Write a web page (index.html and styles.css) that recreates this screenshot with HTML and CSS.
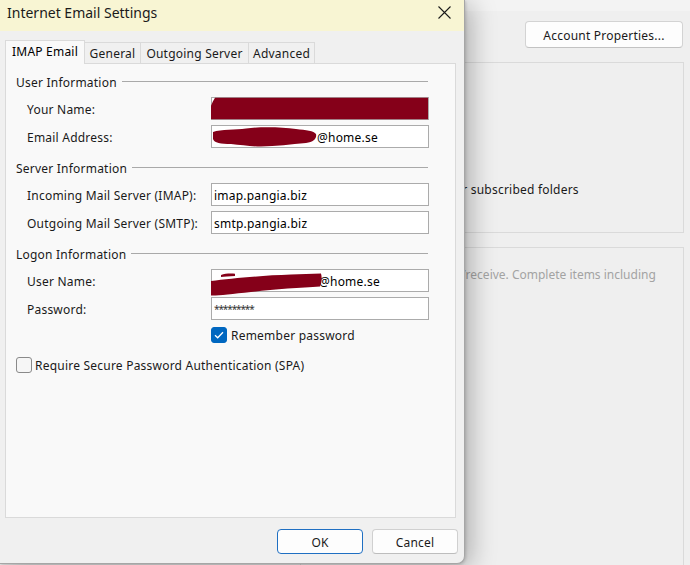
FILE: index.html
```html
<!DOCTYPE html>
<html lang="en">
<head>
<meta charset="utf-8">
<title>Internet Email Settings</title>
<link rel="stylesheet" href="styles.css">
</head>
<body>
<div class="app">
  <div class="app-top">
    <button class="acct-btn">Account Properties...</button>
  </div>
  <div class="app-box box-folders">
    <p class="opt">Show folder list for subscribed folders</p>
  </div>
  <div class="app-box box-sync">
    <p class="note">Send/receive. Complete items including</p>
  </div>
</div>

<div class="dialog">
  <div class="titlebar">
    <span class="title">Internet Email Settings</span>
    <span class="close">
      <svg width="13" height="13" viewBox="0 0 13 13"><path d="M0.5 0.5 L12.5 12.5 M12.5 0.5 L0.5 12.5" stroke="#1b1b1b" stroke-width="1.1" fill="none"/></svg>
    </span>
  </div>
  <div class="dlg-body">
    <div class="tabs">
      <div class="tab active">IMAP Email</div>
      <div class="tab t-general">General</div>
      <div class="tab t-outgoing">Outgoing Server</div>
      <div class="tab t-advanced">Advanced</div>
    </div>
    <div class="panel">
      <div class="group">
        <div class="group-head"><span class="head-text">User Information</span><span class="rule"></span></div>
        <div class="rows">
          <span class="lbl">Your Name:</span>
          <div class="field">
            <svg class="redact" width="222" height="24" viewBox="0 0 222 24"><path d="M4 0.8 L217 0.8 L217 22.2 L0 22.2 C-1 19 0 15 -1 12 C0 8 2 4 4 0.8 Z" fill="#850019"/></svg>
          </div>
          <span class="lbl">Email Address:</span>
          <div class="field">
            <svg class="redact" width="112" height="24" viewBox="0 0 112 24"><path d="M2 7 C10 4 25 5 35 3.5 C50 1.5 70 2 85 4 C95 5 103 6 105 9 C106 13 103 17 95 18 C80 19 65 21.5 50 21.5 C40 21.5 30 20 20 19 C10 19 3 18 2 14 Z" fill="#850019"/></svg>
            <span class="val at-part">@home.se</span>
          </div>
        </div>
      </div>

      <div class="group">
        <div class="group-head"><span class="head-text">Server Information</span><span class="rule"></span></div>
        <div class="rows">
          <span class="lbl">Incoming Mail Server (IMAP):</span>
          <div class="field"><span class="val">imap.pangia.biz</span></div>
          <span class="lbl">Outgoing Mail Server (SMTP):</span>
          <div class="field"><span class="val">smtp.pangia.biz</span></div>
        </div>
      </div>

      <div class="group">
        <div class="group-head"><span class="head-text">Logon Information</span><span class="rule"></span></div>
        <div class="rows">
          <span class="lbl">User Name:</span>
          <div class="field">
            <svg class="redact" width="114" height="30" viewBox="0 0 114 30"><path d="M0 12 C20 9.5 50 6.5 80 5.5 L110 4.5 C111 8 111 13 109 17.5 C90 18.5 60 20.5 40 23 C20 25 5 27 0 26.5 Z" fill="#850019"/><path d="M10 6 C14 4.5 20 4.2 24 4.8 L24 7 C18 7.2 13 7.5 10 8 Z" fill="#850019"/></svg>
            <span class="val at-part user">@home.se</span>
          </div>
          <span class="lbl">Password:</span>
          <div class="field"><span class="val pw">*********</span></div>
        </div>
        <div class="check-row remember">
          <span class="box checked">
            <svg width="10" height="8" viewBox="0 0 10 8"><path d="M1 4.2 L3.7 6.8 L9 1.2" stroke="#fff" stroke-width="1.3" fill="none"/></svg>
          </span>
          <span class="check-text">Remember password</span>
        </div>
      </div>

      <div class="check-row spa">
        <span class="box"></span>
        <span class="check-text">Require Secure Password Authentication (SPA)</span>
      </div>
    </div>
    <div class="buttons">
      <button class="btn ok">OK</button>
      <button class="btn">Cancel</button>
    </div>
  </div>
</div>
</body>
</html>
```

FILE: styles.css
```css
* { box-sizing: border-box; }

html, body {
  margin: 0;
  padding: 0;
  height: 565px;
  overflow: hidden;
}

body {
  position: relative;
  font-family: "Noto Sans", "Open Sans", sans-serif;
  font-size: 12px;
  letter-spacing: 0.22px;
  color: #000;
  background: #efefef;
}

/* background application window */
.app {
  height: 565px;
  display: flex;
  flex-direction: column;
  padding: 21px 6px 0 0;
  background: linear-gradient(#f3f3f3 0 11px, #efefef 11px);
}

.app-top {
  display: flex;
  justify-content: flex-end;
  padding-right: 1px;
}

.acct-btn {
  width: 158px;
  height: 27px;
  font: inherit;
  letter-spacing: inherit;
  color: #1a1a1a;
  background: #fdfdfd;
  border: 1px solid #d3d3d3;
  border-bottom-color: #c2c2c2;
  border-radius: 4px;
  padding: 1px 0 0;
}

.app-box {
  margin-left: 300px;
  border: 1px solid #dadada;
  background: #efefef;
}

.box-folders {
  margin-top: 14px;
  height: 171px;
  padding: 119px 0 0 0;
}

.box-sync {
  margin-top: 14px;
  flex: 1;
  border-bottom: none;
  padding-top: 19px;
}

.opt, .note {
  margin: 0;
  line-height: 16px;
  white-space: nowrap;
}

.opt { padding-left: 56px; color: #1a1a1a; }
.note { padding-left: 132px; color: #a3a3a3; letter-spacing: 0; }

/* dialog window */
.dialog {
  position: absolute;
  left: 0;
  top: 0;
  width: 465px;
  height: 564px;
  display: flex;
  flex-direction: column;
  background: #f0f0f0;
  border-right: 1px solid #a6a6a6;
  border-bottom: 1px solid #a6a6a6;
  border-radius: 0 0 8px 0;
  box-shadow: 6px 4px 26px rgba(0, 0, 0, 0.28), 1px 1px 3px rgba(0, 0, 0, 0.15);
}

.titlebar {
  height: 31px;
  display: flex;
  align-items: flex-start;
  justify-content: space-between;
  background: #f8f5d3;
  padding: 2px 13px 0 7px;
}

.title {
  font-size: 14px;
  letter-spacing: 0;
  line-height: 22px;
  color: #1a1a1a;
}

.close {
  display: flex;
  padding-top: 4px;
}

.dlg-body {
  flex: 1;
  display: flex;
  flex-direction: column;
  padding: 9px 0 0 5px;
}

.tabs {
  display: flex;
  align-items: flex-end;
  height: 23px;
  position: relative;
  z-index: 1;
}

.tab {
  height: 21px;
  border: 1px solid #dadada;
  border-bottom: none;
  background: #f0f0f0;
  margin-left: -1px;
  text-align: center;
  line-height: 21px;
  color: #1a1a1a;
  white-space: nowrap;
}

.tab.active {
  height: 24px;
  margin-bottom: -1px;
  margin-left: 0;
  width: 80px;
  background: #f9f9f9;
  line-height: 21px;
  color: #000;
}

.t-general { width: 57px; }
.t-outgoing { width: 109px; }
.t-advanced { width: 67px; }

.panel {
  width: 451px;
  height: 455px;
  border: 1px solid #dadada;
  background: #f9f9f9;
  padding: 10px 26px 0 10px;
}

.group + .group { margin-top: 12px; }

.group-head {
  display: flex;
  align-items: center;
  height: 16px;
  padding-right: 1px;
  color: #1a1a1a;
}

.head-text {
  line-height: 16px;
  padding-top: 2px;
}

.rule {
  flex: 1;
  height: 1px;
  margin: 0 0 1px 5px;
  background: #a9a9a9;
}

.rows {
  display: grid;
  grid-template-columns: 184px 218px;
  row-gap: 5px;
  align-items: center;
  margin-top: 7px;
  padding-left: 11px;
}

.lbl {
  line-height: 16px;
  padding-top: 2px;
  color: #1a1a1a;
  white-space: nowrap;
}

.field {
  position: relative;
  height: 23px;
  border: 1px solid #ababab;
  background: #fff;
  display: flex;
  align-items: center;
  padding-left: 2px;
}

.val {
  line-height: 16px;
  padding-top: 2px;
  color: #000;
  white-space: nowrap;
}

.at-part { padding-left: 103px; }
.at-part.user { padding-left: 105px; }

.pw {
  font-size: 10px;
  letter-spacing: -1.1px;
  color: #333;
  padding-top: 0;
}

.redact {
  position: absolute;
  left: -1px;
  top: -1px;
}

.check-row {
  display: flex;
  align-items: center;
  gap: 3px;
  height: 16px;
  color: #1a1a1a;
  white-space: nowrap;
}

.check-text {
  line-height: 16px;
  padding-top: 2px;
}

.remember {
  margin-top: 7px;
  padding-left: 195px;
  gap: 4px;
}

.spa {
  margin-top: 14px;
}

.box {
  width: 16px;
  height: 16px;
  border: 1px solid #8a8a8a;
  border-radius: 3px;
  background: #f6f6f6;
  display: flex;
  align-items: center;
  justify-content: center;
}

.box.checked {
  background: #0067c0;
  border-color: #0067c0;
}

.buttons {
  display: flex;
  justify-content: flex-end;
  gap: 9px;
  margin-top: 11px;
  padding-right: 6px;
}

.btn {
  width: 86px;
  height: 25px;
  font: inherit;
  letter-spacing: inherit;
  color: #1a1a1a;
  background: #fdfdfd;
  border: 1px solid #d0d0d0;
  border-bottom-color: #bdbdbd;
  border-radius: 4px;
  padding: 1px 0 0;
}

.btn.ok {
  border-color: #1f6fc2;
}
```
